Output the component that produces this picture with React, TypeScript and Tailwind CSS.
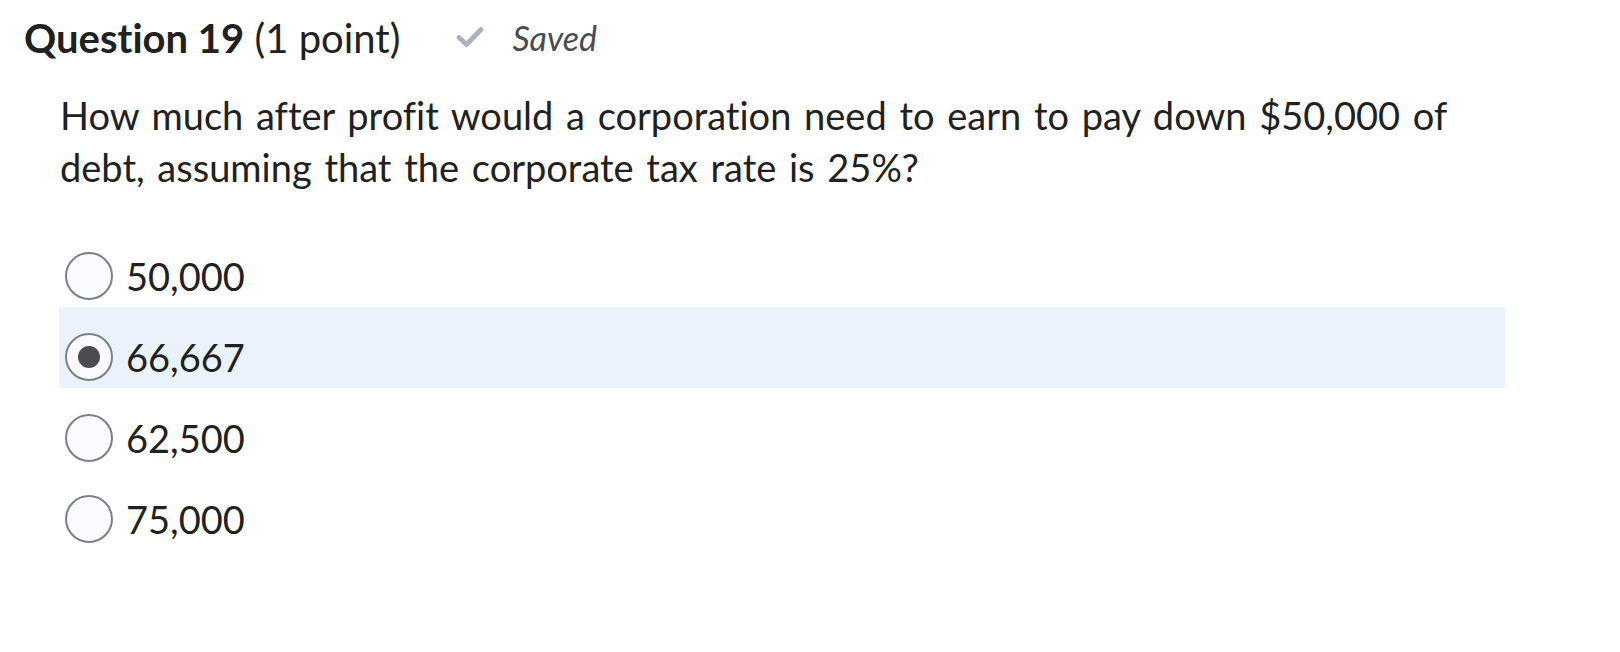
import React from 'react';

const options = [
  { label: '50,000', checked: false },
  { label: '66,667', checked: true },
  { label: '62,500', checked: false },
  { label: '75,000', checked: false },
];

const CheckMark: React.FC = () => (
  <svg width="28" height="22" viewBox="0 0 28 22" fill="none" className="block">
    <path d="M3 11.5 L10.5 18.5 L25 3.5" stroke="#adb3b8" strokeWidth="4.8" strokeLinecap="round" strokeLinejoin="round" />
  </svg>
);

const Radio: React.FC<{ checked: boolean }> = ({ checked }) => (
  <span className="flex items-center justify-center w-[48px] h-[48px] rounded-full border-2 border-[#7c8084] bg-[#f9fbff] shrink-0">
    {checked && <span className="w-[22px] h-[22px] rounded-full bg-[#4a4c4f]" />}
  </span>
);

const App: React.FC = () => {
  return (
    <div
      className="w-[1620px] h-[652px] bg-white text-[#202122] overflow-hidden [font-variant-ligatures:none]"
      style={{ fontFamily: 'Lato, "Noto Sans", sans-serif' }}
    >
      {/* Question header */}
      <div className="flex items-center pl-[24px] pt-[14px] h-[62px]">
        <h2 className="text-[40px] leading-[48px] whitespace-nowrap">
          <span className="font-bold">Question 19</span>
          <span className="font-normal"> (1 point)</span>
        </h2>
        <div className="flex items-center ml-[56px] mt-[-2px]">
          <CheckMark />
          <span className="ml-[28px] text-[34px] italic text-[#494c4e]">Saved</span>
        </div>
      </div>

      {/* Question body */}
      <div className="ml-[59px] w-[1446px] mt-[27px]">
        <p className="text-[38px] leading-[52px] pl-[1px] [word-spacing:3px]">
          How much after profit would a corporation need to earn to pay down $50,000 of debt, assuming that the corporate tax rate is 25%?
        </p>

        <div className="mt-[33px] flex flex-col">
          {options.map((o) => (
            <label
              key={o.label}
              className={`flex items-center h-[81px] pt-[18px] pl-[6px] ${o.checked ? 'bg-[#eaf2fb]' : ''}`}
            >
              <Radio checked={o.checked} />
              <span className="ml-[13px] text-[38px] leading-[52px]">{o.label}</span>
            </label>
          ))}
        </div>
      </div>
    </div>
  );
};

export default App;
